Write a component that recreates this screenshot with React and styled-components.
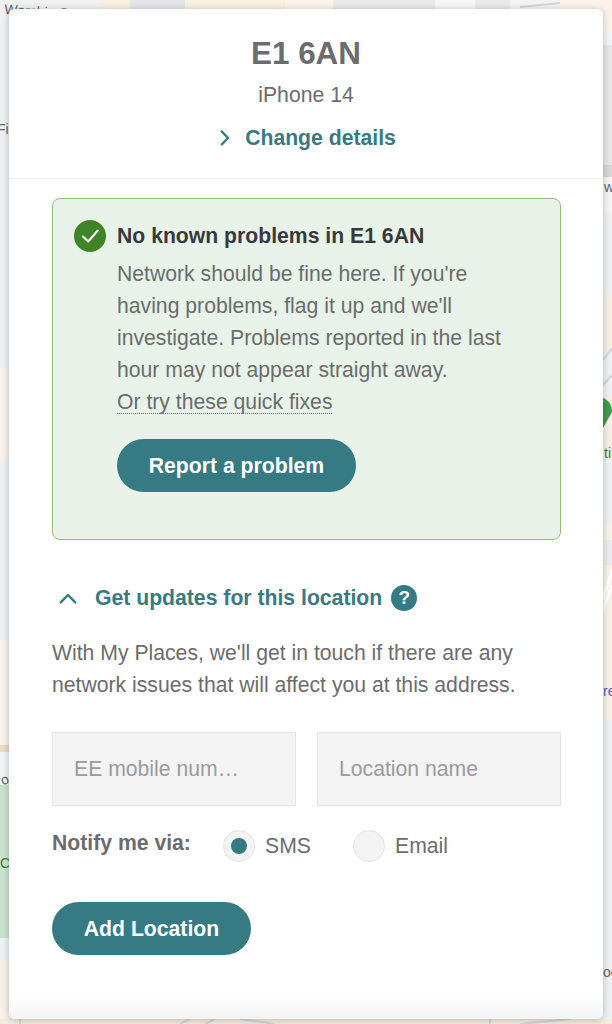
import React from "react";
import styled, { createGlobalStyle } from "styled-components";

const TEAL = "#367a83";
const GREY = "#6b6c6e";

const GlobalStyle = createGlobalStyle`
  html, body {
    margin: 0;
    padding: 0;
    background: #f1f0ec;
  }
  * {
    box-sizing: border-box;
  }
`;

const App = () => (
  <Page>
    <GlobalStyle />
    <MapDrawing />
    <Card>
      <Header>
        <Postcode>E1 6AN</Postcode>
        <Device>iPhone 14</Device>
        <ChangeLink>
          <svg width="10" height="16" viewBox="0 0 10 16" fill="none">
            <path d="M1.8 1.5 L8 8 L1.8 14.5" stroke={TEAL} strokeWidth="2.4" strokeLinecap="round" strokeLinejoin="round" />
          </svg>
          <span>Change details</span>
        </ChangeLink>
      </Header>
      <Content>
        <StatusPanel>
          <CheckBadge>
            <svg width="20" height="20" viewBox="0 0 20 20" fill="none">
              <path d="M3 10.5 L8.2 15.5 L17.8 4.5" stroke="#fff" strokeWidth="2" strokeLinecap="round" strokeLinejoin="round" />
            </svg>
          </CheckBadge>
          <StatusBody>
            <StatusTitle>No known problems in E1 6AN</StatusTitle>
            <StatusText>
              Network should be fine here. If you're having problems, flag it up and we'll investigate. Problems reported in the last hour may not appear straight away.
            </StatusText>
            <QuickFixes>Or try these quick fixes</QuickFixes>
            <ReportButton>Report a problem</ReportButton>
          </StatusBody>
        </StatusPanel>

        <UpdatesToggle>
          <svg width="18" height="11" viewBox="0 0 18 11" fill="none">
            <path d="M1.8 9.4 L9 2 L16.2 9.4" stroke={TEAL} strokeWidth="2.4" strokeLinecap="round" strokeLinejoin="round" />
          </svg>
          <UpdatesLabel>Get updates for this location</UpdatesLabel>
          <HelpBadge>?</HelpBadge>
        </UpdatesToggle>
        <Intro>
          With My Places, we'll get in touch if there are any network issues that will affect you at this address.
        </Intro>

        <Fields>
          <Field placeholder="EE mobile number" />
          <Field placeholder="Location name" />
        </Fields>

        <NotifyRow>
          <NotifyLabel>Notify me via:</NotifyLabel>
          <RadioOption $width={130}>
            <RadioCircle $checked />
            SMS
          </RadioOption>
          <RadioOption>
            <RadioCircle />
            Email
          </RadioOption>
        </NotifyRow>

        <AddButton>Add Location</AddButton>
      </Content>
      <BottomFade />
    </Card>
  </Page>
);

// the map that shows behind the card
const MapDrawing = () => (
  <MapSvg viewBox="0 0 612 1024" preserveAspectRatio="none">
    <rect width="612" height="1024" fill="#eef0f2" />
    {/* top edge */}
    <path d="M100 0H130V10H100Z" fill="#f8eee0" />
    <path d="M130 0H185V10H130Z" fill="#e4e5e8" />
    <path d="M185 0H285V10H185Z" fill="#f9efe0" />
    <path d="M285 0H333V10H285Z" fill="#fbf3ea" />
    <path d="M333 0H510V10H333Z" fill="#e9e9e9" />
    <path d="M435 0H475V10H435Z" fill="#f6f6f6" />
    <path d="M510 0H560V10H510Z" fill="#f2f3f4" />
    <path d="M560 0H612V30H560Z" fill="#fbf3ea" />
    <path d="M520 7L560 3" stroke="#d5d6d8" strokeWidth="2" />
    {/* left edge */}
    <path d="M0 368H10V460H0Z" fill="#f6f1ea" />
    <path d="M0 640H10V745H0Z" fill="#f6f1ea" />
    <path d="M0 745H10V752H0Z" fill="#eadcc4" />
    <path d="M0 752H10V785H0Z" fill="#f2f3f4" />
    <path d="M0 785H10V938H0Z" fill="#c9e2cd" />
    <path d="M0 960H10V1024H0Z" fill="#f7f0e6" />
    {/* right edge */}
    <path d="M603 30H612V45H603Z" fill="#f3f4f5" />
    <path d="M603 45H612V165H603Z" fill="#e6e6e6" />
    <path d="M603 165H612V177H603Z" fill="#d6d6d8" />
    <path d="M603 177H612V212H603Z" fill="#f4f4f4" />
    <path d="M603 295H612V350H603Z" fill="#f7efe4" />
    <path d="M603 395H612V460H603Z" fill="#f5efe8" />
    <path d="M603 525H612V720H603Z" fill="#f7f2e8" />
    <path d="M603 540H612V565H603Z" fill="#ececee" />
    <path d="M603 360L612 348M603 385L612 375" stroke="#d5d6d8" strokeWidth="2" />
    <path d="M603 600L612 570M603 610L612 585" stroke="#fff" strokeWidth="3" />
    {/* bottom edge */}
    <path d="M0 1019H612V1024H0Z" fill="#f3ebe0" />
    <path d="M20 1024V1019M180 1024L190 1019M205 1024L215 1019M240 1019L275 1024M490 1024V1019M520 1024L570 1019" stroke="#d4d5d8" strokeWidth="2" />
    <path d="M603 398C608 400 612 404 612 412L603 428Z" fill="#3f9a4c" />
    <MapText x="4" y="14" transform="rotate(4 4 14)">Worship St</MapText>
    <MapText x="-3" y="134">Fi</MapText>
    <MapText x="604" y="192">w</MapText>
    <MapText x="604" y="458" $tint="#2f7d3c">ti</MapText>
    <MapText x="603" y="696" $tint="#3e66c2">re</MapText>
    <MapText x="-2" y="786" transform="rotate(-18 0 786)">ro</MapText>
    <MapText x="0" y="868" $tint="#2f7d3c">C</MapText>
    <MapText x="603" y="977">oo</MapText>
  </MapSvg>
);

const Page = styled.div`
  position: relative;
  width: 612px;
  height: 1024px;
  padding: 9px 9px 5px 9px;
  overflow: hidden;
  font-family: "Liberation Sans", Arial, sans-serif;
  font-size: 21.2px;
  color: ${GREY};
`;

const MapSvg = styled.svg`
  position: absolute;
  inset: 0;
  width: 612px;
  height: 1024px;
`;

const MapText = styled.text`
  font-family: "Liberation Sans", Arial, sans-serif;
  font-size: 14px;
  fill: ${(p) => p.$tint || "#5f6368"};
`;

const Card = styled.div`
  position: relative;
  width: 594px;
  height: 1010px;
  background: #fff;
  border-radius: 6px;
  box-shadow: 0 1px 7px rgba(0, 0, 0, 0.24);
  overflow: hidden;
`;

const Header = styled.div`
  height: 170px;
  padding-top: 27px;
  display: flex;
  flex-direction: column;
  align-items: center;
  border-bottom: 1px solid #f3f3f3;
`;

const Postcode = styled.div`
  font-size: 31.4px;
  line-height: 36px;
  font-weight: 700;
`;

const Device = styled.div`
  margin-top: 10px;
  line-height: 26px;
`;

const ChangeLink = styled.div`
  margin-top: 17px;
  padding-left: 4px;
  display: flex;
  align-items: center;
  gap: 15px;
  line-height: 26px;
  font-weight: 700;
  color: ${TEAL};
`;

const Content = styled.div`
  padding: 19px 42px 0 43px;
`;

const StatusPanel = styled.div`
  height: 342px;
  padding: 21px 21px 0;
  display: flex;
  gap: 11px;
  background: #e9f2e8;
  border: 1px solid #8fbf7f;
  border-radius: 8px;
`;

const CheckBadge = styled.div`
  flex: none;
  width: 32px;
  height: 32px;
  border-radius: 50%;
  background: #3f8528;
  display: flex;
  align-items: center;
  justify-content: center;
`;

const StatusBody = styled.div`
  flex: 1;
  min-width: 0;
  padding-right: 20px;
`;

const StatusTitle = styled.div`
  line-height: 32px;
  font-weight: 700;
  color: #38393d;
`;

const StatusText = styled.div`
  margin-top: 6px;
  line-height: 32px;
`;

const QuickFixes = styled.div`
  width: fit-content;
  margin-top: 4px;
  line-height: 23px;
  border-bottom: 1px dotted ${GREY};
`;

const PillButton = styled.button`
  display: block;
  height: 53px;
  border: 0;
  border-radius: 27px;
  background: ${TEAL};
  color: #fff;
  font-family: inherit;
  font-size: 21.2px;
  font-weight: 700;
`;

const ReportButton = styled(PillButton)`
  width: 239px;
  margin-top: 25px;
`;

const UpdatesToggle = styled.div`
  margin-top: 43px;
  height: 30px;
  display: flex;
  align-items: center;
  padding-left: 7px;
  color: ${TEAL};
`;

const UpdatesLabel = styled.span`
  margin-left: 18px;
  font-weight: 700;
`;

const HelpBadge = styled.span`
  margin-left: 9px;
  width: 26px;
  height: 26px;
  border-radius: 50%;
  background: ${TEAL};
  color: #fff;
  font-size: 19px;
  font-weight: 700;
  display: flex;
  align-items: center;
  justify-content: center;
`;

const Intro = styled.p`
  margin: 24px 0 0;
  line-height: 32px;
`;

const Fields = styled.div`
  margin-top: 31px;
  display: grid;
  grid-template-columns: 244px 244px;
  gap: 21px;
`;

const Field = styled.input`
  width: 100%;
  height: 74px;
  padding: 0 48px 0 21px;
  background: #f3f3f3;
  border: 1px solid #e6e6e6;
  border-radius: 0;
  font-family: inherit;
  font-size: 21.2px;
  text-overflow: ellipsis;
  &::placeholder {
    color: #9a9b9d;
    opacity: 1;
  }
  &:placeholder-shown {
    text-overflow: ellipsis;
  }
`;

const NotifyRow = styled.div`
  margin-top: 24px;
  display: flex;
  align-items: center;
  height: 32px;
`;

const NotifyLabel = styled.span`
  width: 171px;
  font-weight: 700;
  position: relative;
  top: -3px;
`;

const RadioOption = styled.label`
  width: ${(p) => (p.$width ? `${p.$width}px` : "auto")};
  display: flex;
  align-items: center;
  gap: 10px;
`;

const RadioCircle = styled.span`
  width: 32px;
  height: 32px;
  border-radius: 50%;
  background: #f3f3f3;
  border: 1px solid #e4e4e4;
  display: flex;
  align-items: center;
  justify-content: center;
  &::after {
    content: "";
    display: ${(p) => (p.$checked ? "block" : "none")};
    width: 16px;
    height: 16px;
    border-radius: 50%;
    background: ${TEAL};
  }
`;

const AddButton = styled(PillButton)`
  width: 199px;
  margin-top: 40px;
`;

const BottomFade = styled.div`
  position: absolute;
  left: 0;
  right: 0;
  bottom: 0;
  height: 24px;
  background: linear-gradient(rgba(243, 243, 243, 0), #f3f3f3);
`;

export default App;
